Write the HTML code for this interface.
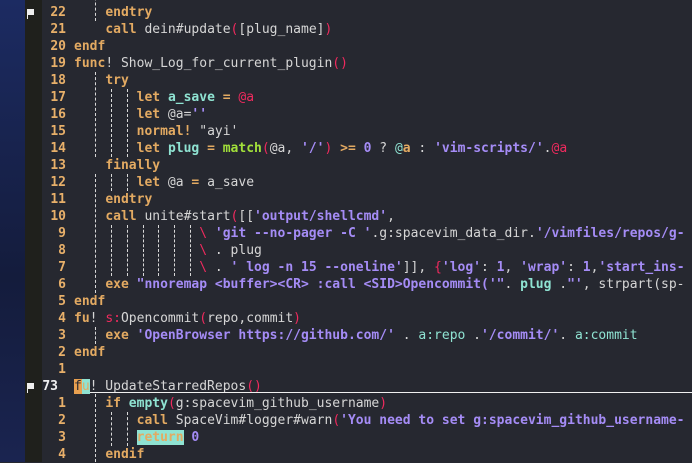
<!DOCTYPE html>
<html><head><meta charset="utf-8"><style>
*{margin:0;padding:0}
body{width:692px;height:462px;overflow:hidden;background:#262830;position:relative;font-family:"DejaVu Sans Mono","Liberation Mono",monospace;font-size:13px;color:#d6d6d6}
#strip{position:absolute;left:0;top:0;width:25px;height:462px;background:linear-gradient(180deg,#1c2b62,#141c3c 60%,#1a2450)}
#sign{position:absolute;left:25px;top:0;width:17px;height:462px;background:#1f201c}
.r{position:absolute;left:0;height:17px;line-height:17px;width:692px}
.n{position:absolute;left:42px;width:24px;text-align:right;color:#e8b06a;font-weight:bold}
.c{position:absolute;left:74px;white-space:pre}
.k{color:#e3aa62;font-weight:bold}
.f{color:#d6d6d6}
.t{color:#8fe3d2}
.tb{color:#8fe3d2;font-weight:bold}
.g{color:#a2e03a;font-weight:bold}
.s{color:#a58cf6;font-weight:bold}
.p{color:#f02a5e}
.o{color:#e3aa62;font-weight:bold}
.gd{position:absolute;width:0;height:17px;border-left:1px dashed #d8d8d8}
.flag{position:absolute;left:27px;width:7px;height:6px;background:#eee;top:5px}
.flag:before{content:"";position:absolute;left:0;top:0;width:1px;height:10px;background:#eee}
</style></head><body>
<div id="strip"></div><div id="sign"></div>

<div class="r" style="top:4px"><div class="flag"></div><span class="n">22</span><span class="c">    <span class="k">endtry</span></span></div>
<div class="r" style="top:21px"><span class="n">21</span><span class="c">    <span class="k">call</span> dein#update<span class="p">(</span>[plug_name]<span class="p">)</span></span></div>
<div class="r" style="top:38px"><span class="n">20</span><span class="c"><span class="k">endf</span></span></div>
<div class="r" style="top:55px"><span class="n">19</span><span class="c"><span class="k">func</span>! Show_Log_for_current_plugin<span class="p">()</span></span></div>
<div class="r" style="top:72px"><span class="n">18</span><span class="c">    <span class="k">try</span></span></div>
<div class="r" style="top:89px"><span class="n">17</span><span class="c">        <span class="k">let</span> <span class="tb">a_save</span> <span class="o">=</span> <span class="p">@a</span></span></div>
<div class="r" style="top:106px"><span class="n">16</span><span class="c">        <span class="k">let</span> @a=<span class="s">''</span></span></div>
<div class="r" style="top:123px"><span class="n">15</span><span class="c">        <span class="k">normal!</span> "ayi'</span></div>
<div class="r" style="top:140px"><span class="n">14</span><span class="c">        <span class="k">let</span> <span class="tb">plug</span> <span class="o">=</span> <span class="g">match</span><span class="p">(</span>@a, <span class="s">'/'</span><span class="p">)</span> <span class="o">&gt;=</span> <span class="s">0</span> ? <span class="t">@</span><span class="k">a</span> : <span class="s">'vim-scripts/'</span>.<span class="p">@a</span></span></div>
<div class="r" style="top:157px"><span class="n">13</span><span class="c">    <span class="k">finally</span></span></div>
<div class="r" style="top:174px"><span class="n">12</span><span class="c">        <span class="k">let</span> @a <span class="o">=</span> a_save</span></div>
<div class="r" style="top:191px"><span class="n">11</span><span class="c">    <span class="k">endtry</span></span></div>
<div class="r" style="top:208px"><span class="n">10</span><span class="c">    <span class="k">call</span> unite#start<span class="p">(</span>[[<span class="s">'output/shellcmd'</span>,</span></div>
<div class="r" style="top:225px"><span class="n">9</span><span class="c">                <span class="p">\</span> <span class="s">'git --no-pager -C '</span>.g:spacevim_data_dir.<span class="s">'/vimfiles/repos/g-</span></span></div>
<div class="r" style="top:242px"><span class="n">8</span><span class="c">                <span class="p">\</span> . plug</span></div>
<div class="r" style="top:259px"><span class="n">7</span><span class="c">                <span class="p">\</span> . <span class="s">' log -n 15 --oneline'</span>]], <span class="p">{</span><span class="s">'log'</span>: <span class="s">1</span>, <span class="s">'wrap'</span>: <span class="s">1</span>,<span class="s">'start_ins-</span></span></div>
<div class="r" style="top:276px"><span class="n">6</span><span class="c">    <span class="k">exe</span> <span class="s">"nnoremap &lt;buffer&gt;&lt;CR&gt; :call &lt;SID&gt;Opencommit('"</span>. <span class="tb">plug</span> .<span class="s">"'</span>, strpart(sp-</span></div>
<div class="r" style="top:293px"><span class="n">5</span><span class="c"><span class="k">endf</span></span></div>
<div class="r" style="top:310px"><span class="n">4</span><span class="c"><span class="k">fu</span>! <span class="p">s:</span>Opencommit<span class="p">(</span>repo,commit<span class="p">)</span></span></div>
<div class="r" style="top:327px"><span class="n">3</span><span class="c">    <span class="k">exe</span> <span class="s">'OpenBrowser https://github.com/'</span> . <span class="t">a:repo</span> .<span class="s">'/commit/'</span>. <span class="t">a:commit</span></span></div>
<div class="r" style="top:344px"><span class="n">2</span><span class="c"><span class="k">endf</span></span></div>
<div class="r" style="top:361px"><span class="n">1</span></div>
<div class="r" style="top:378px"><div class="flag"></div><span class="n" style="left:34px;color:#f0f0f0">73</span><span class="c"><span style="background:#e8a050;color:#262830">f</span><span style="background:#8fe3d2;color:#e3aa62">u</span>! UpdateStarredRepos<span class="p">()</span></span></div>
<div style="position:absolute;left:90px;top:392px;width:602px;height:1px;background:#f0f0f0"></div>
<div class="r" style="top:395px"><span class="n">1</span><span class="c">    <span class="k">if</span> <span class="tb">empty</span><span class="p">(</span>g:spacevim_github_username<span class="p">)</span></span></div>
<div class="r" style="top:412px"><span class="n">2</span><span class="c">        <span class="k">call</span> SpaceVim#logger#warn<span class="p">(</span><span class="s">'You need to set g:spacevim_github_username-</span></span></div>
<div class="r" style="top:429px"><span class="n">3</span><span class="c">        <span class="k" style="background:#8fe3d2;color:#e3aa62">return</span> <span class="s">0</span></span></div>
<div class="r" style="top:446px"><span class="n">4</span><span class="c">    <span class="k">endif</span></span></div>

<!-- indent guides -->
<div class="gd" style="left:95px;top:-13px;height:34px"></div>
<div class="gd" style="left:95px;top:72px;height:85px"></div>
<div class="gd" style="left:95px;top:174px;height:119px"></div>
<div class="gd" style="left:111px;top:89px;height:68px"></div>
<div class="gd" style="left:127px;top:89px;height:68px"></div>
<div class="gd" style="left:111px;top:174px;height:17px"></div>
<div class="gd" style="left:127px;top:174px;height:17px"></div>
<div class="gd" style="left:111px;top:225px;height:51px"></div>
<div class="gd" style="left:127px;top:225px;height:51px"></div>
<div class="gd" style="left:143px;top:225px;height:51px"></div>
<div class="gd" style="left:158px;top:225px;height:51px"></div>
<div class="gd" style="left:174px;top:225px;height:51px"></div>
<div class="gd" style="left:190px;top:225px;height:51px"></div>
<div class="gd" style="left:95px;top:327px;height:17px"></div>
<div class="gd" style="left:95px;top:394px;height:68px"></div>
<div class="gd" style="left:111px;top:412px;height:34px"></div>
<div class="gd" style="left:127px;top:412px;height:34px"></div>
</body></html>
